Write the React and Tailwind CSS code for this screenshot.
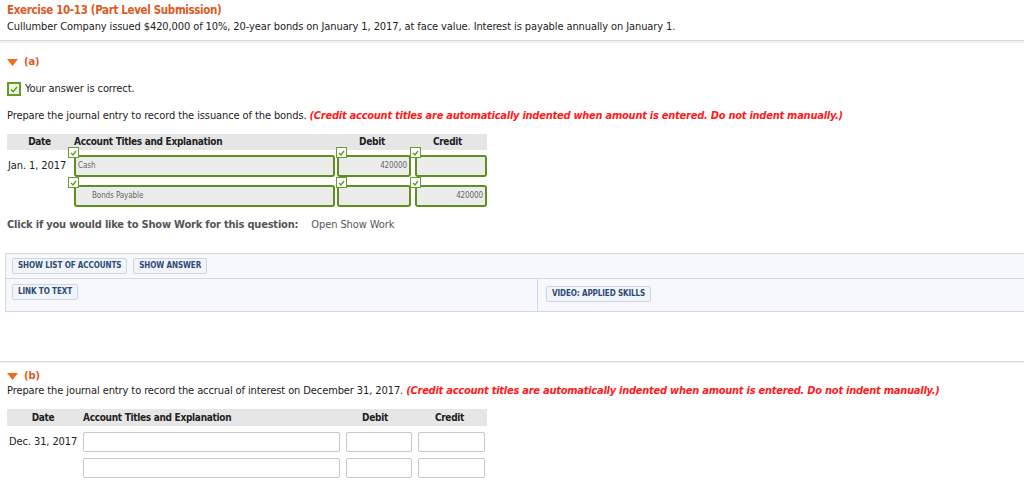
import React from "react";

const font = { fontFamily: '"DejaVu Sans Condensed", "DejaVu Sans", Verdana, sans-serif' };

function Tri() {
  return (
    <svg width="11" height="7" viewBox="0 0 11 7" className="shrink-0">
      <path d="M0 0 L11 0 L5.5 7 Z" fill="#f26b1d" />
    </svg>
  );
}

function SmallCheck({ className }) {
  return (
    <div className={"absolute w-[11px] h-[11px] bg-white border border-[#6b9a2a] flex items-center justify-center z-10 " + className}>
      <svg width="7" height="6" viewBox="0 0 7 6">
        <path d="M1 3 L3 5 L6 1" stroke="#5e9a1a" strokeWidth="1.3" fill="none" />
      </svg>
    </div>
  );
}

function GInput({ w, text, right, indent, checkLeft = "-left-[6px]" }) {
  return (
    <div className={"relative " + w}>
      <SmallCheck className={"-top-[8px] " + checkLeft} />
      <div
        className={
          "h-[22px] rounded-[3px] border-2 border-[#5f8f1f] bg-[#ececed] flex items-center text-[8px] text-[#666] " +
          (right ? "justify-end pr-[2px]" : indent ? "pl-[16px]" : "pl-[2px]")
        }
      >
        {text}
      </div>
    </div>
  );
}

function Btn({ children }) {
  return (
    <div className="h-[16px] px-[5px] flex items-center rounded-[2px] border border-[#cfd6df] bg-[#f1f4f8] text-[8px] font-bold text-[#2e4a78]">
      {children}
    </div>
  );
}

function WInput({ w }) {
  return <div className={"h-[20px] rounded-[2px] border border-[#c9c9c9] bg-white " + w}></div>;
}

export default function App() {
  return (
    <div className="w-[1024px] h-[485px] bg-white overflow-hidden text-[11px] text-[#222] leading-[14px] tracking-[-0.1px]" style={font}>
      <div className="px-[7px] pt-[3px]">
        <div className="text-[11.5px] font-bold text-[#dd5a23] tracking-[-0.35px]">Exercise 10-13 (Part Level Submission)</div>
        <div className="mt-[3px]">
          Cullumber Company issued $420,000 of 10%, 20-year bonds on January 1, 2017, at face value. Interest is payable annually on January 1.
        </div>
      </div>
      <div className="mt-[6px] border-t border-[#d5dbe3] h-[3px] bg-[#eef1f5]"></div>

      <div className="px-[7px]">
        <div className="mt-[12px] flex items-center gap-[6px]">
          <Tri />
          <span className="font-bold text-[#dd5a23] text-[11px]">(a)</span>
        </div>
        <div className="mt-[13px] flex items-center gap-[4px] h-[14px]">
          <div className="w-[14px] h-[14px] border-2 border-[#6b9a2a] bg-[#eef6e2] flex items-center justify-center">
            <svg width="8" height="7" viewBox="0 0 8 7">
              <path d="M1 3.5 L3.2 5.6 L7 1" stroke="#5e9a1a" strokeWidth="1.4" fill="none" />
            </svg>
          </div>
          <span>Your answer is correct.</span>
        </div>
        <div className="mt-[13px]">
          Prepare the journal entry to record the issuance of the bonds.{" "}
          <span className="font-bold italic text-[#ff1a1a] tracking-[-0.25px]">
            (Credit account titles are automatically indented when amount is entered. Do not indent manually.)
          </span>
        </div>

        <div className="mt-[11px] w-[480px] h-[16px] bg-[#e6e6e6] flex items-center font-bold text-[10px] tracking-[-0.3px]">
          <div className="w-[65px] text-center">Date</div>
          <div className="w-[262px] pl-[2px]">Account Titles and Explanation</div>
          <div className="w-[76px] text-center">Debit</div>
          <div className="w-[75px] text-center">Credit</div>
        </div>

        <div className="mt-[5px] flex items-center">
          <div className="w-[67px] shrink-0 whitespace-nowrap pl-[1px]">Jan. 1, 2017</div>
          <GInput w="w-[261px]" text="Cash" />
          <div className="w-[2px]" />
          <GInput w="w-[74px]" text="420000" right checkLeft="-left-[1px]" />
          <div className="w-[4px]" />
          <GInput w="w-[72px]" text="" checkLeft="-left-[5px]" />
        </div>
        <div className="mt-[8px] flex items-center">
          <div className="w-[67px] shrink-0" />
          <GInput w="w-[261px]" text="Bonds Payable" indent />
          <div className="w-[2px]" />
          <GInput w="w-[74px]" text="" checkLeft="-left-[1px]" />
          <div className="w-[4px]" />
          <GInput w="w-[72px]" text="420000" right checkLeft="-left-[5px]" />
        </div>

        <div className="mt-[11px] flex">
          <span className="font-bold text-[#555] tracking-[-0.2px]">Click if you would like to Show Work for this question:</span>
          <span className="ml-[13px] text-[#555]">Open Show Work</span>
        </div>
      </div>

      <div className="mt-[21px] ml-[5px] border border-r-0 border-[#d2d9e2] bg-[#f6f8fb]">
        <div className="h-[25px] flex items-center gap-[6px] pl-[6px] border-b border-[#d2d9e2]">
          <Btn>SHOW LIST OF ACCOUNTS</Btn>
          <Btn>SHOW ANSWER</Btn>
        </div>
        <div className="h-[32px] flex">
          <div className="w-[532px] border-r border-[#d2d9e2] pl-[6px] pt-[5px]">
            <div className="inline-flex"><Btn>LINK TO TEXT</Btn></div>
          </div>
          <div className="pl-[8px] pt-[7px]">
            <div className="inline-flex"><Btn>VIDEO: APPLIED SKILLS</Btn></div>
          </div>
        </div>
      </div>

      <div className="mt-[49px] border-t border-[#d5dbe3] h-[2px] bg-[#eef1f5]"></div>

      <div className="px-[7px]">
        <div className="mt-[6px] flex items-center gap-[6px]">
          <Tri />
          <span className="font-bold text-[#dd5a23] text-[11px]">(b)</span>
        </div>
        <div className="mt-[1px] whitespace-nowrap">
          Prepare the journal entry to record the accrual of interest on December 31, 2017.{" "}
          <span className="font-bold italic text-[#ff1a1a] tracking-[-0.25px]">
            (Credit account titles are automatically indented when amount is entered. Do not indent manually.)
          </span>
        </div>

        <div className="mt-[11px] w-[480px] h-[17px] bg-[#e6e6e6] flex items-center font-bold text-[10px] tracking-[-0.3px]">
          <div className="w-[72px] text-center">Date</div>
          <div className="w-[259px] pl-[4px]">Account Titles and Explanation</div>
          <div className="w-[74px] text-center">Debit</div>
          <div className="w-[75px] text-center">Credit</div>
        </div>

        <div className="mt-[6px] flex items-center">
          <div className="w-[76px] shrink-0 whitespace-nowrap pl-[2px]">Dec. 31, 2017</div>
          <WInput w="w-[257px]" />
          <div className="w-[6px]" />
          <WInput w="w-[66px]" />
          <div className="w-[6px]" />
          <WInput w="w-[67px]" />
        </div>
        <div className="mt-[6px] flex items-center">
          <div className="w-[76px] shrink-0" />
          <WInput w="w-[257px]" />
          <div className="w-[6px]" />
          <WInput w="w-[66px]" />
          <div className="w-[6px]" />
          <WInput w="w-[67px]" />
        </div>
      </div>
    </div>
  );
}
